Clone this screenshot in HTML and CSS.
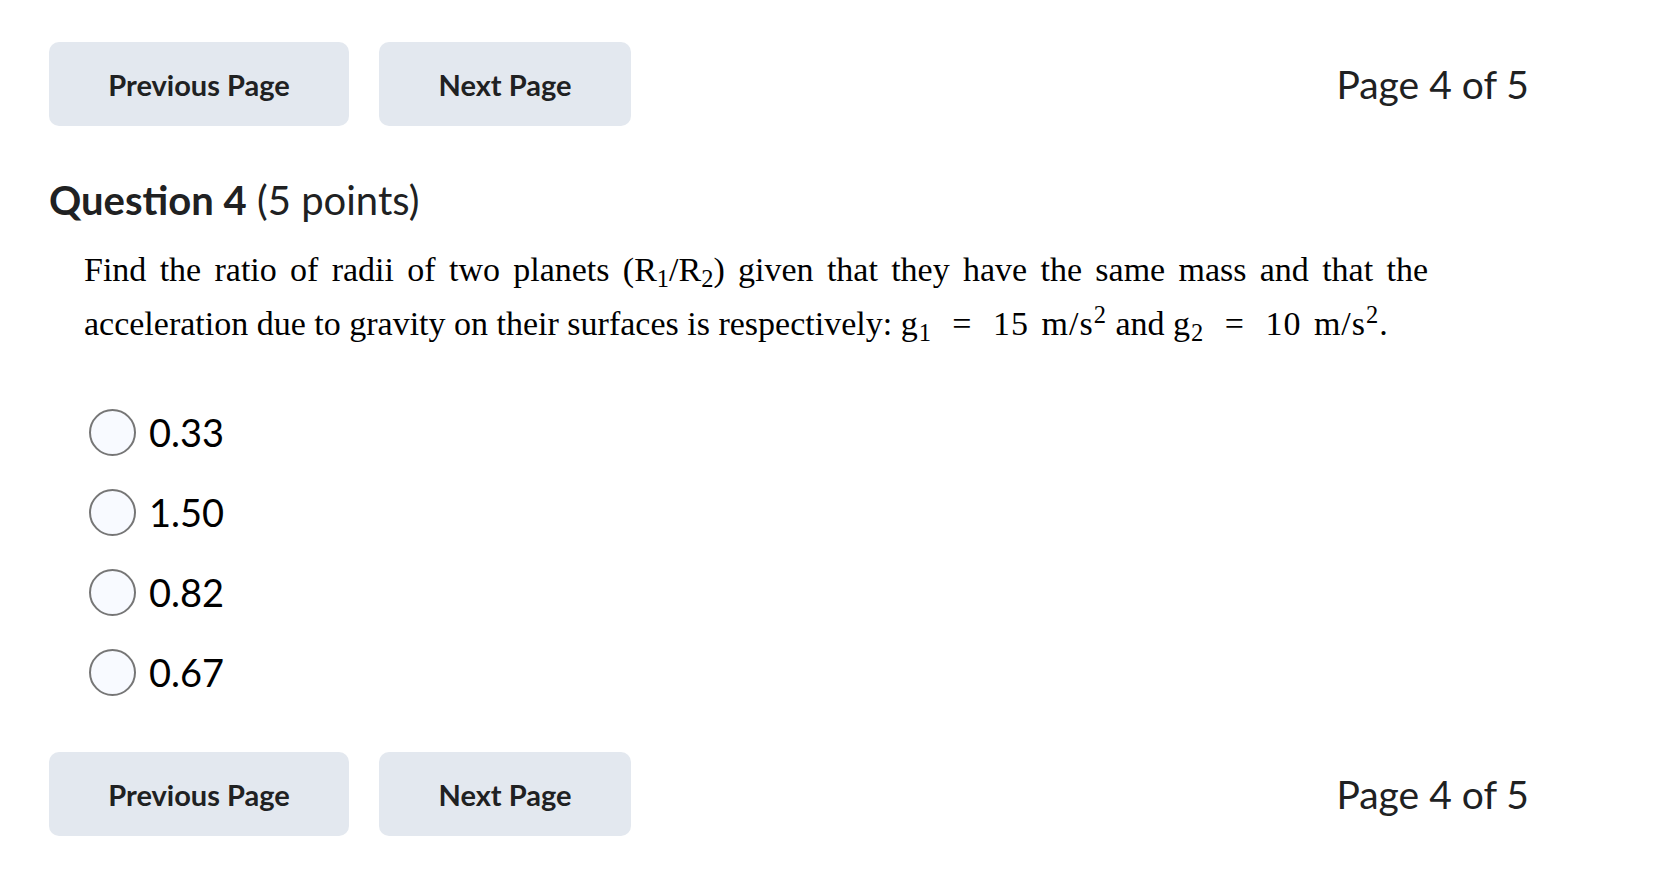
FILE: index.html
```html
<!DOCTYPE html>
<html lang="en">
<head>
<meta charset="utf-8">
<title>Question 4</title>
<link rel="stylesheet" href="styles.css">
</head>
<body>
<div class="page">
  <nav class="pager">
    <button class="btn btn-prev" type="button">Previous Page</button>
    <button class="btn btn-next" type="button">Next Page</button>
    <span class="page-label">Page 4 of 5</span>
  </nav>

  <h2 class="q-title"><strong>Question 4</strong> <span class="q-points">(5 points)</span></h2>

  <div class="q-text">
    <span class="line line-first">Find the ratio of radii of two planets (R<sub>1</sub>/R<sub>2</sub>) given that they have the same mass and that the</span>
    <span class="line">acceleration due to gravity on their surfaces is respectively: <span class="math">g<sub>1</sub> <span class="eq">=</span> 15 m/s<sup>2</sup></span> and <span class="math">g<sub>2</sub> <span class="eq">=</span> 10 m/s<sup>2</sup></span>.</span>
  </div>

  <ul class="options">
    <li class="option"><span class="radio"></span><span class="opt-label">0.33</span></li>
    <li class="option"><span class="radio"></span><span class="opt-label">1.50</span></li>
    <li class="option"><span class="radio"></span><span class="opt-label">0.82</span></li>
    <li class="option"><span class="radio"></span><span class="opt-label">0.67</span></li>
  </ul>

  <nav class="pager pager-bottom">
    <button class="btn btn-prev" type="button">Previous Page</button>
    <button class="btn btn-next" type="button">Next Page</button>
    <span class="page-label">Page 4 of 5</span>
  </nav>
</div>
</body>
</html>
```

FILE: styles.css
```css
html, body {
  margin: 0;
  padding: 0;
  background: #ffffff;
}

body {
  font-family: Lato, "Noto Sans", sans-serif;
  color: #202122;
}

.page {
  padding: 42px 127px 0 49px;
}

.pager {
  display: flex;
  align-items: center;
  gap: 30px;
}

.btn {
  height: 84px;
  border: none;
  border-radius: 10px;
  background: #e3e8ef;
  color: #202122;
  font-family: Lato, "Noto Sans", sans-serif;
  font-weight: 700;
  font-size: 29px;
  padding: 0;
  cursor: pointer;
}

.btn-prev {
  width: 300px;
}

.btn-next {
  width: 252px;
}

.page-label {
  margin-left: auto;
  font-size: 39px;
  color: #202122;
  padding-right: 6px;
}

.q-title {
  margin: 52px 0 0;
  font-size: 40px;
  line-height: 44px;
  font-weight: 400;
  color: #202122;
}

.q-title strong {
  font-weight: 700;
}

.q-text {
  margin: 21px 0 0 35px;
  width: 1344px;
  font-family: "Liberation Serif", "DejaVu Serif", serif;
  font-size: 34px;
  line-height: 54px;
  color: #000;
}

.line {
  display: block;
}

.line-first {
  text-align: justify;
  text-align-last: justify;
}

.q-text sub {
  font-size: 0.72em;
  vertical-align: -0.25em;
  line-height: 0;
}

.q-text sup {
  font-size: 0.72em;
  vertical-align: 0.5em;
  line-height: 0;
}

.math {
  letter-spacing: 1px;
  word-spacing: 3px;
}

.eq {
  padding: 0 8px;
}

.options {
  list-style: none;
  margin: 41px 0 0 40px;
  padding: 0;
}

.option {
  display: flex;
  align-items: center;
  height: 80px;
}

.radio {
  width: 43px;
  height: 43px;
  border: 2px solid #767676;
  border-radius: 50%;
  background: #f8faff;
  flex: none;
}

.opt-label {
  margin-left: 13px;
  font-size: 38px;
  color: #000;
}

.pager-bottom {
  margin-top: 40px;
}
```
